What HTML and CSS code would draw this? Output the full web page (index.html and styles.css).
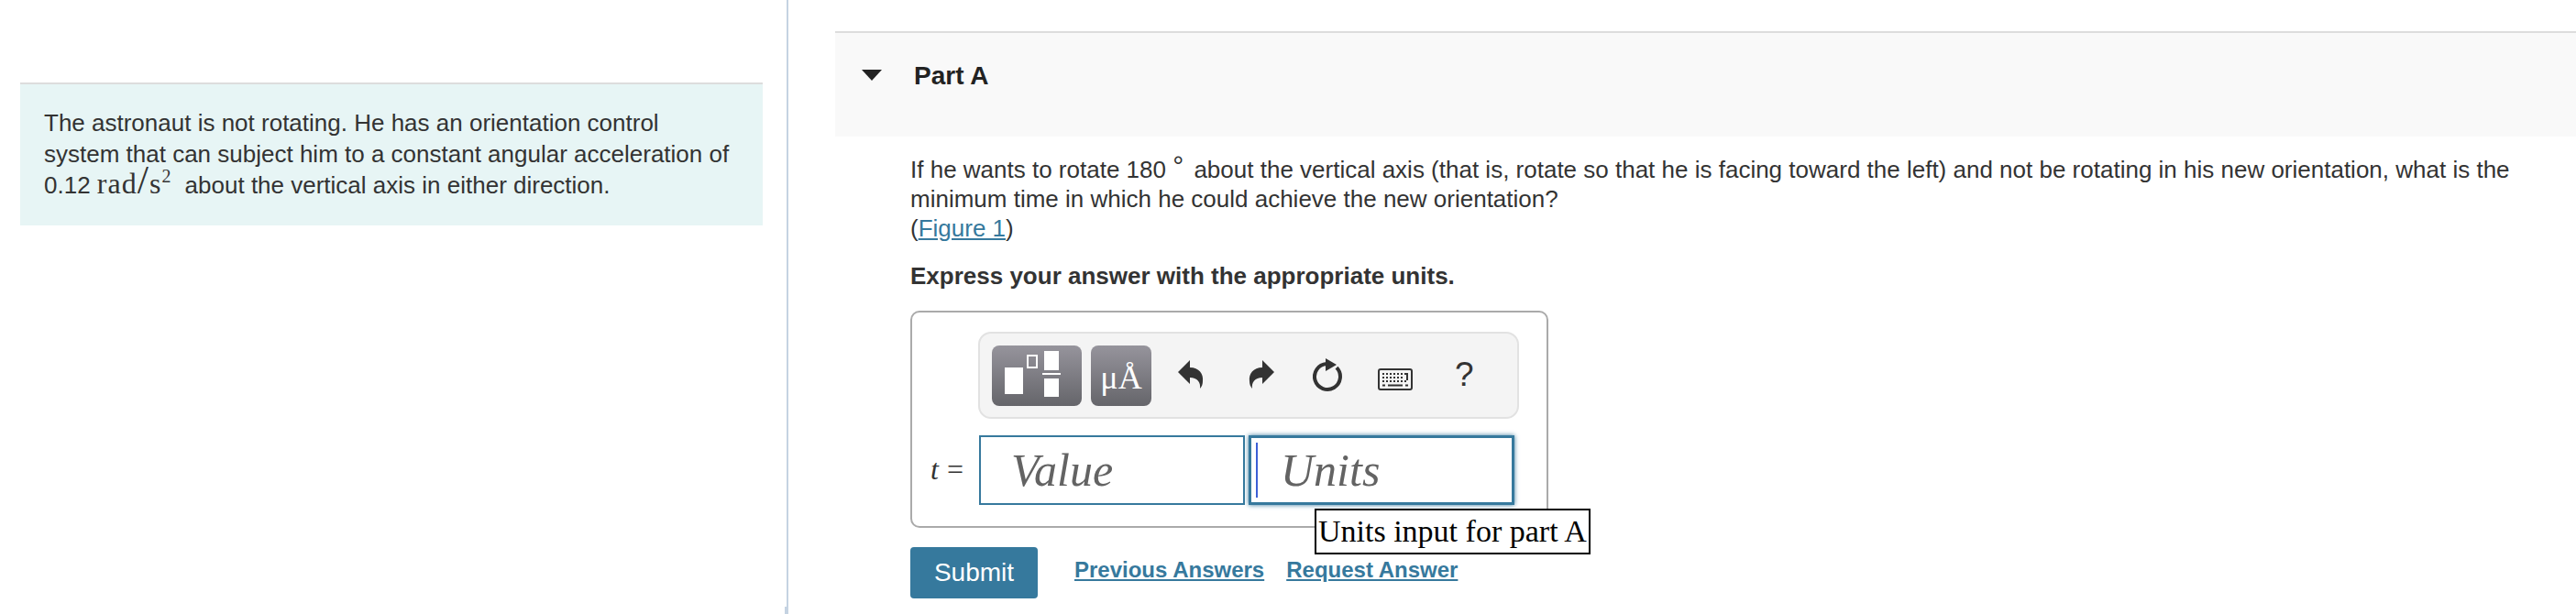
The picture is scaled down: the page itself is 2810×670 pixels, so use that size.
FILE: index.html
```html
<!DOCTYPE html>
<html lang="en">
<head>
    <meta charset="UTF-8">
    <title>Part A</title>
    <link rel="stylesheet" href="styles.css">
</head>
<body>

<div class="page">
    <!-- Left column with the problem intro -->
    <div class="intro-col">
        <div class="intro">
            <p>The astronaut is not rotating. He has an orientation control<br>
            system that can subject him to a constant angular acceleration of<br>
            0.12 <span class="math">rad<span class="slash">/</span>s<sup>2</sup></span> about the vertical axis in either direction.</p>
        </div>
    </div>

    <!-- Right column with the question -->
    <div class="part-col">
        <div class="part-header">
            <span class="arrow"></span>
            <h2>Part A</h2>
        </div>

        <div class="part-body">
            <p class="question">If he wants to rotate 180 <span class="deg">&deg;</span> about the vertical axis (that is, rotate so that he is facing toward the left) and not be rotating in his new orientation, what is the<br>
            minimum time in which he could achieve the new orientation?<br>
            (<a href="#">Figure 1</a>)</p>

            <p class="instruction">Express your answer with the appropriate units.</p>

            <div class="answer-box">
                <div class="toolbar">
                    <button class="tool-btn tool-templates">
                        <svg width="66" height="54" viewBox="0 0 66 54">
                            <rect x="0" y="21" width="20" height="29" fill="#fff"/>
                            <rect x="25" y="8" width="10" height="13" fill="none" stroke="#fff" stroke-width="2"/>
                            <rect x="43" y="3" width="16" height="21" fill="#fff"/>
                            <rect x="41" y="27" width="20" height="2" fill="#fff"/>
                            <rect x="43" y="33" width="16" height="20" fill="#fff"/>
                        </svg>
                    </button>
                    <button class="tool-btn tool-symbols">&mu;&Aring;</button>

                    <svg class="icon icon-undo" width="28" height="32" viewBox="0 0 28 32">
                        <path d="M0 13 L13 0 L13 8 C23 8 28 15 27 23 C27 26 26 29 24 31 C25 24 21 19 13 19 L13 26 Z" fill="#333"/>
                    </svg>
                    <svg class="icon icon-redo" width="28" height="32" viewBox="0 0 28 32">
                        <path d="M28 13 L15 0 L15 8 C5 8 0 15 1 23 C1 26 2 29 4 31 C3 24 7 19 15 19 L15 26 Z" fill="#333"/>
                    </svg>
                    <svg class="icon icon-reset" width="34" height="38" viewBox="0 0 34 38">
                        <path d="M26 10.2 A14 14 0 1 1 15 6" fill="none" stroke="#333" stroke-width="4"/>
                        <path d="M14 0 L26 7 L14 14 Z" fill="#333"/>
                    </svg>
                    <svg class="icon icon-keyboard" width="38" height="24" viewBox="0 0 38 24">
                        <rect x="1" y="1" width="36" height="22" rx="2" fill="none" stroke="#333" stroke-width="2"/>
                        <path d="M5 6 H31 M5 10 H29 M5 14 H33" stroke="#333" stroke-width="2" stroke-dasharray="2 2" fill="none"/>
                        <path d="M32 5 V13 M11 18.5 H27 M5 18.5 H8 M30 18.5 H33" stroke="#333" stroke-width="2" fill="none"/>
                    </svg>
                    <span class="help">?</span>
                </div>

                <div class="input-row">
                    <span class="var-label"><i>t</i> =</span>
                    <div class="input input-value">Value</div>
                    <div class="input input-units">
                        <span class="caret"></span>Units
                        <span class="tooltip">Units input for part A</span>
                    </div>
                </div>
            </div>

            <div class="actions">
                <button class="submit">Submit</button>
                <a class="action-link" href="#">Previous Answers</a>
                <a class="action-link" href="#">Request Answer</a>
            </div>
        </div>
    </div>
</div>

</body>
</html>
```

FILE: styles.css
```css
html, body {
    margin: 0;
    height: 100%;
    background-color: #fff;
}
body {
    font-family: "Liberation Sans", Arial, sans-serif;
    font-size: 26px;
    color: #333;
    overflow: hidden;
}
.page {
    display: flex;
    height: 670px;
}
p {
    margin: 0;
}

/* left column */
.intro-col {
    box-sizing: border-box;
    position: relative;
    width: 860px;
    flex-shrink: 0;
    padding: 90px 26px 0 22px;
    border-right: 2px solid #c5d3e2;
}
.intro-col::after {
    content: "";
    position: absolute;
    right: -2px;
    bottom: 0;
    width: 4px;
    height: 8px;
    background-color: #c5d3e2;
}
.intro {
    background-color: #e7f5f5;
    border-top: 2px solid #ddd;
    padding: 25px 26px 0;
    height: 156px;
    box-sizing: border-box;
    line-height: 34px;
}
.math {
    font-family: "Liberation Serif", serif;
    font-size: 32px;
    line-height: 0;
    letter-spacing: 1px;
    margin-right: 7px;
}
.slash {
    font-size: 44px;
    font-weight: 100;
    line-height: 0;
}
.math sup {
    font-size: 20px;
    line-height: 0;
}

/* right column */
.part-col {
    flex: 1;
    padding: 34px 0 0 51px;
}
.part-header {
    display: flex;
    align-items: flex-start;
    background-color: #f9f9f9;
    border-top: 2px solid #ddd;
    height: 115px;
    box-sizing: border-box;
    padding: 31px 0 0 29px;
}
.arrow {
    width: 0;
    height: 0;
    margin-top: 9px;
    border-left: 11px solid transparent;
    border-right: 11px solid transparent;
    border-top: 12px solid #222;
}
.part-header h2 {
    margin: 0 0 0 35px;
    font-size: 28px;
    line-height: 32px;
    color: #222;
}
.part-body {
    padding: 20px 0 0 82px;
}
.question {
    line-height: 32px;
}
.deg {
    font-size: 30px;
    line-height: 0;
    vertical-align: 3px;
    padding-right: 4px;
}
.question a {
    color: #36799d;
}
.instruction {
    margin-top: 20px;
    font-weight: bold;
    line-height: 32px;
}

/* answer box */
.answer-box {
    box-sizing: border-box;
    width: 696px;
    height: 237px;
    margin-top: 22px;
    padding: 21px 0 0 72px;
    border: 2px solid #aaa;
    border-radius: 10px;
}
.toolbar {
    box-sizing: border-box;
    display: flex;
    align-items: flex-start;
    width: 590px;
    height: 95px;
    background-color: #f4f4f4;
    border: 2px solid #e2e2e2;
    border-radius: 14px;
    padding: 13px 0 0 13px;
}
.tool-btn {
    height: 66px;
    padding: 0;
    border: none;
    border-radius: 8px;
    background: linear-gradient(#96949c, #65656a);
    color: #fff;
}
.tool-templates {
    width: 98px;
    display: flex;
    padding: 3px 0 0 14px;
    box-sizing: border-box;
}
.tool-symbols {
    width: 66px;
    margin-left: 10px;
    font-family: "Liberation Serif", serif;
    font-size: 36px;
    line-height: 66px;
    padding-top: 2px;
}
.icon {
    flex-shrink: 0;
}
.icon-undo {
    margin: 16px 0 0 29px;
}
.icon-redo {
    margin: 16px 0 0 49px;
}
.icon-reset {
    margin: 14px 0 0 42px;
}
.icon-keyboard {
    margin: 25px 0 0 37px;
}
.help {
    margin: 12px 0 0 46px;
    font-size: 37px;
    line-height: 40px;
}

.input-row {
    display: flex;
    align-items: center;
    margin: 18px 0 0 -52px;
}
.var-label {
    width: 53px;
    flex-shrink: 0;
    font-family: "Liberation Serif", serif;
    font-size: 32px;
    word-spacing: 1px;
    margin-top: -2px;
}
.input {
    box-sizing: border-box;
    position: relative;
    height: 76px;
    border: 2px solid #36799d;
    background-color: #fff;
    font-family: "Liberation Serif", serif;
    font-style: italic;
    font-size: 50px;
    line-height: 72px;
    color: #636363;
}
.input-value {
    width: 290px;
    padding-left: 33px;
}
.input-units {
    width: 290px;
    margin-left: 4px;
    padding-left: 32px;
    border-width: 3px;
    line-height: 70px;
    box-shadow: 0 0 5px #36799d;
}
.caret {
    position: absolute;
    left: 5px;
    top: 5px;
    width: 2px;
    height: 60px;
    background-color: #3d5fd6;
}
.tooltip {
    position: absolute;
    left: 69px;
    top: 77px;
    padding: 0 2px;
    border: 2px solid #000;
    background-color: #fff;
    color: #000;
    font-style: normal;
    font-size: 34px;
    line-height: 46px;
    white-space: nowrap;
}

/* submit row */
.actions {
    display: flex;
    align-items: flex-start;
    margin-top: 21px;
}
.submit {
    width: 139px;
    height: 56px;
    padding: 0;
    border: none;
    border-radius: 4px;
    background-color: #36799d;
    color: #fff;
    font-family: "Liberation Sans", Arial, sans-serif;
    font-size: 28px;
}
.action-link {
    margin: 11px 0 0 24px;
    font-size: 24px;
    line-height: 28px;
    font-weight: bold;
    color: #36799d;
}
.submit + .action-link {
    margin-left: 40px;
}
```
